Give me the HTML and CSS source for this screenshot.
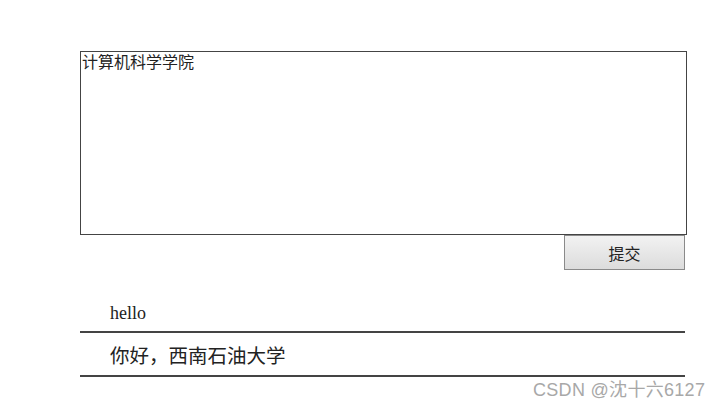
FILE: index.html
```html
<!DOCTYPE html>
<html lang="zh">
<head>
<meta charset="utf-8">
<link rel="stylesheet" href="styles.css">
</head>
<body>
<div class="page">
  <textarea class="input">计算机科学学院</textarea>
  <div class="actions"><button class="submit">提交</button></div>
  <ul class="list">
    <li class="item en">hello</li>
    <li class="item zh">你好，西南石油大学</li>
  </ul>
</div>
<div class="watermark">CSDN @沈十六6127</div>
</body>
</html>
```
FILE: styles.css
```css
html, body { margin: 0; padding: 0; background: #fff; }
body { width: 720px; height: 409px; overflow: hidden; position: relative; }
.page { padding: 51px 0 0 80px; width: 607px; }
.input {
  display: block; box-sizing: border-box; width: 607px; height: 184px;
  margin: 0; padding: 0 1px; border: 1px solid #444; resize: none; outline: none;
  font-family: "Noto Sans CJK SC", sans-serif; font-size: 16px; line-height: 19px; color: #222;
}
.actions { display: flex; justify-content: flex-end; padding-right: 2px; }
.submit {
  box-sizing: border-box; width: 121px; height: 35px; margin: 0;
  border: 1px solid #8a8a8a; border-radius: 0;
  background: linear-gradient(#f2f2f2, #dcdcdc);
  font-family: "Noto Sans CJK SC", sans-serif; font-size: 16px; color: #222;
}
.list { list-style: none; margin: 19px 0 0; padding: 0; width: 605px; }
.item { box-sizing: border-box; height: 44px; border-bottom: 2px solid #444; padding-left: 30px; display: flex; align-items: center; color: #222; }
.en { font-family: "Liberation Serif", serif; font-size: 18px; padding-top: 6px; }
.zh { font-family: "Noto Sans CJK SC", sans-serif; font-size: 19.5px; }
.watermark {
  position: absolute; left: 533px; top: 379px;
  font-family: "Liberation Sans", "Noto Sans CJK SC", sans-serif; font-size: 18px; color: #a8a8a8;
  line-height: 22px; letter-spacing: 0.3px;
}
```
